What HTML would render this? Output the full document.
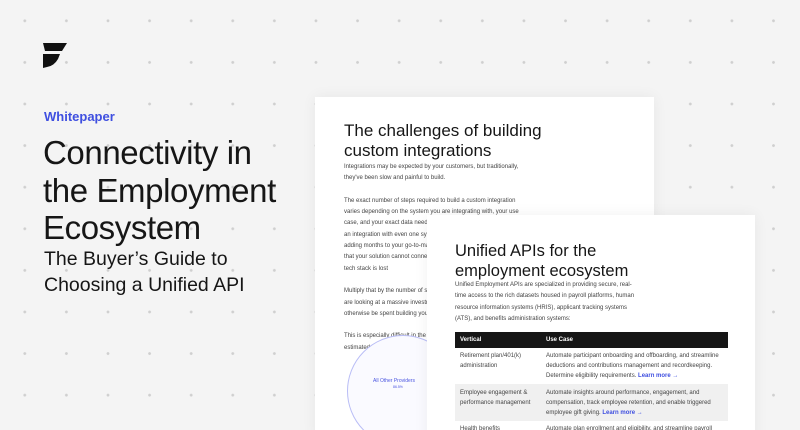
<!DOCTYPE html>
<html style="width:800px;height:430px;overflow:hidden"><head><meta charset="utf-8"><style>
*{margin:0;padding:0;box-sizing:border-box}
body{width:800px;height:430px;overflow:hidden;background:#f4f4f4;font-family:"Liberation Sans",sans-serif;position:relative;
background-image:radial-gradient(circle,#cfcfcf 1.2px,transparent 1.6px);background-size:41.6px 41.6px;background-position:4px 0px}
.abs{position:absolute}
.doc{background:#fff;box-shadow:0 0 14px rgba(0,0,0,0.06);overflow:hidden}
.small{font-size:6px;line-height:11.3px;color:#444}
.cell{font-size:6px;line-height:9.8px;color:#444}
</style></head><body>
<svg class="abs" style="left:43px;top:42px" width="25" height="27" viewBox="0 0 25 27">
<path d="M0 1 L24 1 L19 9 L2 9 Z" fill="#111"/>
<path d="M0 12 L17 12 L15 17 Q11 24 4 25 L0 26 Z" fill="#111"/>
</svg>
<div class="abs" style="left:44px;top:109px;font-size:13px;color:#3f4fe0;font-weight:bold">Whitepaper</div>
<div class="abs" style="left:43px;top:134px;font-size:33px;line-height:37.5px;color:#161616;letter-spacing:-0.4px">Connectivity in<br>the Employment<br>Ecosystem</div>
<div class="abs" style="left:44px;top:247px;font-size:19.5px;line-height:25.5px;color:#161616">The Buyer’s Guide to<br>Choosing a Unified API</div>

<div class="abs doc" style="left:315px;top:97px;width:339px;height:340px">
 <div class="abs" style="left:29px;top:24px;font-size:17px;line-height:20px;color:#161616">The challenges of building<br>custom integrations</div>
 <div class="abs small" style="left:29px;top:65px;width:182px">Integrations may be expected by your customers, but traditionally, they've been slow and painful to build.<br><br>The exact number of steps required to build a custom integration varies depending on the system you are integrating with, your use case, and your exact data needs. But you can expect that building an integration with even one system will take hundreds of hours, adding months to your go-to-market timeline and because every day that your solution cannot connect to your prospect's or customer's tech stack is lost<br><br>Multiply that by the number of systems you need to support and you are looking at a massive investment of resources that could otherwise be spent building your product features.<br><br>This is especially difficult in the employment space with an estimated 5,700 payroll providers</div>
 <div class="abs" style="left:32px;top:238px;width:112px;height:112px;border:1px solid #b9bdf6;border-radius:50%;background:#fafaff"></div>
 <div class="abs" style="left:58px;top:281px;font-size:5px;color:#4a55e0">All Other Providers</div>
 <div class="abs" style="left:78px;top:288px;font-size:3.5px;color:#4a55e0">86.5%</div>
</div>

<div class="abs doc" style="left:427px;top:215px;width:328px;height:230px">
 <div class="abs" style="left:28px;top:26px;font-size:16.5px;line-height:20px;color:#161616">Unified APIs for the<br>employment ecosystem</div>
 <div class="abs small" style="left:28px;top:65px;width:180px">Unified Employment APIs are specialized in providing secure, real-time access to the rich datasets housed in payroll platforms, human resource information systems (HRIS), applicant tracking systems (ATS), and benefits administration systems:</div>
 <div class="abs" style="left:28px;top:117px;width:273px;height:16px;background:#161616;color:#fff;font-size:6px;font-weight:bold">
  <span class="abs" style="left:5px;top:5px">Vertical</span><span class="abs" style="left:91px;top:5px">Use Case</span></div>
 <div class="abs cell" style="left:28px;top:133px;width:273px;height:36px">
  <span class="abs" style="left:5px;top:4px;width:80px">Retirement plan/401(k) administration</span>
  <span class="abs" style="left:91px;top:4px;width:180px">Automate participant onboarding and offboarding, and streamline deductions and contributions management and recordkeeping. Determine eligibility requirements. <b style="color:#3f4fe0;font-weight:bold">Learn more →</b></span></div>
 <div class="abs cell" style="left:28px;top:169px;width:273px;height:37px;background:#f0f0f0">
  <span class="abs" style="left:5px;top:5px;width:80px">Employee engagement &amp; performance management</span>
  <span class="abs" style="left:91px;top:5px;width:180px">Automate insights around performance, engagement, and compensation, track employee retention, and enable triggered employee gift giving. <b style="color:#3f4fe0;font-weight:bold">Learn more →</b></span></div>
 <div class="abs cell" style="left:28px;top:206px;width:273px">
  <span class="abs" style="left:5px;top:4px">Health benefits</span>
  <span class="abs" style="left:91px;top:4px;white-space:nowrap">Automate plan enrollment and eligibility, and streamline payroll</span></div>
</div>
</body></html>
